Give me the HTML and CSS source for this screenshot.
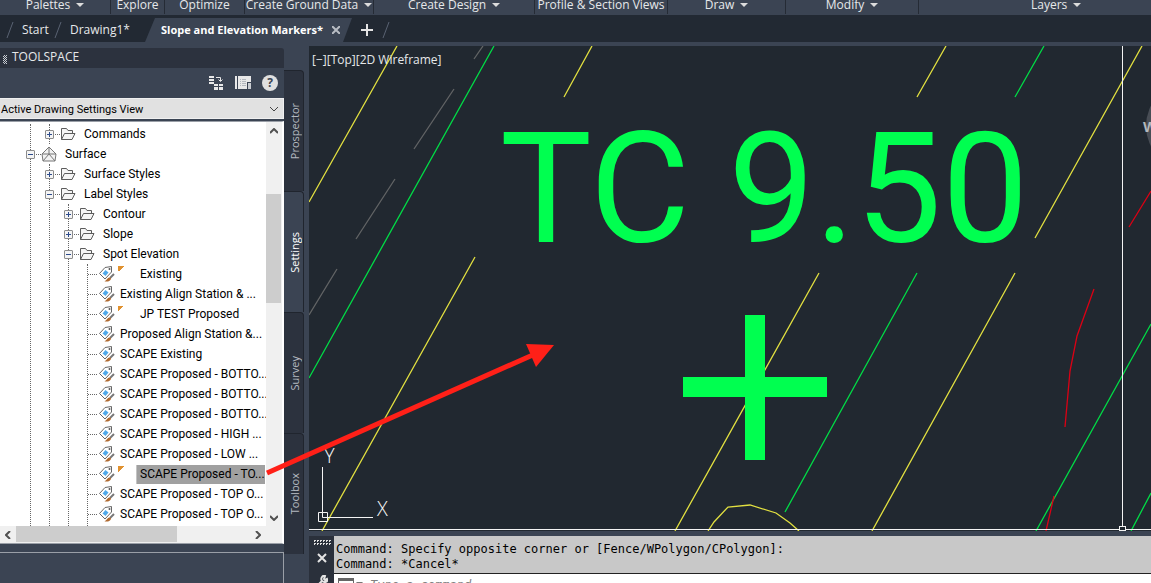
FILE: index.html
```html
<!DOCTYPE html>
<html lang="en">
<head>
  <meta charset="utf-8">
  <title>Slope and Elevation Markers</title>
  <link rel="stylesheet" href="styles.css">
</head>
<body>

  <!-- icons used in the tree -->
  <svg class="defs" width="0" height="0" aria-hidden="true">
    <symbol id="folder" viewBox="0 0 16 16">
      <path d="M1.500 13.500V2.500H6.500L8 4.500H12.500V7.500M1.500 13.500L4.500 7.500H15L12 13.500Z" fill="#f4f4f4" stroke="#5c5c5c"/>
    </symbol>
    <symbol id="surface" viewBox="0 0 16 16">
      <path d="M8 1L1 8L2 15H14L15 8ZM8 1V8M1 8H8L15 8M8 8L2 15M8 8L14 15" fill="#f2f2f2" stroke="#777"/>
    </symbol>
    <symbol id="tag" viewBox="0 0 16 16">
      <path d="M6 1.500L12.500 .500V6L6 13L.500 7.500Z" fill="#fff" stroke="#666"/>
      <circle cx="10.500" cy="3" r="1" fill="#555"/>
      <path d="M6.500 4L9.500 6.500L6.500 10L3.500 7.500Z" fill="#4fa9ea"/>
      <path d="M15 8L11 12" stroke="#777" stroke-width="2"/>
      <path d="M12 12L10 11.500C8 12 8 14 5.500 15.500C9 16 12 15 12 12Z" fill="#b06a30"/>
    </symbol>
  </svg>

  <nav class="ribbon">
    <button class="menu">Palettes</button>
    <button class="plain">Explore</button>
    <button class="plain">Optimize</button>
    <button class="menu">Create Ground Data</button>
    <button class="menu">Create Design</button>
    <button class="plain">Profile &amp; Section Views</button>
    <button class="menu">Draw</button>
    <button class="menu">Modify</button>
    <button class="menu layers">Layers</button>
  </nav>

  <nav class="files">
    <svg class="slash" width="8" height="16"><path d="M7 0L1 16"/></svg>
    <a href="#" class="file start">Start</a>
    <svg class="slash" width="8" height="16"><path d="M7 0L1 16"/></svg>
    <a href="#" class="file drawing">Drawing1*</a>
    <div class="file active">
      <a href="#">Slope and Elevation Markers*</a>
      <button class="close" aria-label="Close tab"><svg width="8" height="8"><path d="M0 0L8 8M8 0L0 8"/></svg></button>
    </div>
    <button class="add" aria-label="New tab"><svg width="12" height="12"><path d="M6 0V12M0 6H12"/></svg></button>
    <svg class="slash" width="8" height="16"><path d="M7 0L1 16"/></svg>
  </nav>

  <main>
    <section class="toolspace">
      <h1><span class="grip"></span>TOOLSPACE</h1>
      <div class="tools">
        <button aria-label="Item view"><svg width="16" height="16">
          <path d="M1 1H6V3H1ZM1 4H6V6H1ZM1 7H6V9H1ZM6 9H10V11H6ZM6 12H10V15H6ZM11 9H15V11H11ZM11 12H15V15H11Z" fill="#e8e8e8"/>
          <path d="M8 2.500H12.500V6M10.500 4.500L12.500 6.500L14.500 4.500" fill="none" stroke="#e8e8e8"/></svg></button>
        <button aria-label="Preview"><svg width="16" height="16">
          <path d="M0 1H2V14H0ZM3 1H16V7H12V14H3Z" fill="#e8e8e8"/>
          <path d="M5 4.500H11M5 6.500H11M5 8.500H11M5 10.500H11" stroke="#b4b8be" stroke-dasharray="1 1 4 1"/>
          <path d="M13 8H16V14H13Z" fill="#c9ccd1"/></svg></button>
        <button class="help" aria-label="Help">?</button>
      </div>
      <select class="view" aria-label="View">
        <option>Active Drawing Settings View</option>
      </select>

      <div class="tree-box">
        <div class="tree">
          <ul>
            <li>
              <ul>
                <li><div class="row"><button class="box plus" aria-label="Expand"></button><svg class="icon"><use href="#folder"/></svg>Commands</div></li>
              </ul>
            </li>
            <li><div class="row"><button class="box" aria-label="Collapse"></button><svg class="icon"><use href="#surface"/></svg>Surface</div>
              <ul>
                <li><div class="row"><button class="box plus" aria-label="Expand"></button><svg class="icon"><use href="#folder"/></svg>Surface Styles</div></li>
                <li><div class="row"><button class="box" aria-label="Collapse"></button><svg class="icon"><use href="#folder"/></svg>Label Styles</div>
                  <ul>
                    <li><div class="row"><button class="box plus" aria-label="Expand"></button><svg class="icon"><use href="#folder"/></svg>Contour</div></li>
                    <li><div class="row"><button class="box plus" aria-label="Expand"></button><svg class="icon"><use href="#folder"/></svg>Slope</div></li>
                    <li><div class="row"><button class="box" aria-label="Collapse"></button><svg class="icon"><use href="#folder"/></svg>Spot Elevation</div>
                      <ul>
                        <li class="row leaf used"><svg class="icon"><use href="#tag"/></svg><span>Existing</span></li>
                        <li class="row leaf"><svg class="icon"><use href="#tag"/></svg><span>Existing Align Station &amp; ...</span></li>
                        <li class="row leaf used"><svg class="icon"><use href="#tag"/></svg><span>JP TEST Proposed</span></li>
                        <li class="row leaf"><svg class="icon"><use href="#tag"/></svg><span>Proposed Align Station &amp;...</span></li>
                        <li class="row leaf"><svg class="icon"><use href="#tag"/></svg><span>SCAPE Existing</span></li>
                        <li class="row leaf"><svg class="icon"><use href="#tag"/></svg><span>SCAPE Proposed - BOTTO...</span></li>
                        <li class="row leaf"><svg class="icon"><use href="#tag"/></svg><span>SCAPE Proposed - BOTTO...</span></li>
                        <li class="row leaf"><svg class="icon"><use href="#tag"/></svg><span>SCAPE Proposed - BOTTO...</span></li>
                        <li class="row leaf"><svg class="icon"><use href="#tag"/></svg><span>SCAPE Proposed - HIGH ...</span></li>
                        <li class="row leaf"><svg class="icon"><use href="#tag"/></svg><span>SCAPE Proposed - LOW ...</span></li>
                        <li class="row leaf used selected"><svg class="icon"><use href="#tag"/></svg><span>SCAPE Proposed - TO...</span></li>
                        <li class="row leaf"><svg class="icon"><use href="#tag"/></svg><span>SCAPE Proposed - TOP O...</span></li>
                        <li class="row leaf"><svg class="icon"><use href="#tag"/></svg><span>SCAPE Proposed - TOP O...</span></li>
                        <li class="row leaf used"><svg class="icon"><use href="#tag"/></svg></li>
                      </ul>
                    </li>
                  </ul>
                </li>
              </ul>
            </li>
          </ul>
        </div>
        <div class="vbar">
          <button aria-label="Scroll up"><svg width="8" height="6"><path d="M0 5L4 1L8 5"/></svg></button>
          <div class="thumb"></div>
          <button aria-label="Scroll down"><svg width="8" height="6"><path d="M0 1L4 5L8 1"/></svg></button>
        </div>
        <div class="hbar">
          <button aria-label="Scroll left"><svg width="6" height="8"><path d="M5 0L1 4L5 8"/></svg></button>
          <div class="thumb"></div>
          <button aria-label="Scroll right"><svg width="6" height="8"><path d="M1 0L5 4L1 8"/></svg></button>
        </div>
      </div>
      <div class="details"></div>
    </section>

    <nav class="side">
      <button><span>Prospector</span></button>
      <button class="on"><span>Settings</span></button>
      <button><span>Survey</span></button>
      <button><span>Toolbox</span></button>
    </nav>

    <section class="work">
      <div class="canvas">
        <svg class="model" viewBox="309 46 842 485" preserveAspectRatio="xMinYMin slice">
          <g class="grey">
            <path d="M483 46L474 59M454 89L414 149M395 179L356 239M337 269L309 315"/>
          </g>
          <g class="yellow">
            <path d="M397 46L309 202M592 46L564 97M946 46L917 97M1142 46L1035 238M475 257L322 531M819 273L675 531M1015 273L872 531"/>
            <path d="M708 531L714 522L728 507L750 505L776 513L790 523L799 531"/>
          </g>
          <g class="green">
            <path d="M494 46L309 378M1044 46L1015 97M917 273L785 512M1151 324L1036 531M1151 493L1131 531"/>
          </g>
          <g class="red">
            <path d="M1151 191L1129 227M1094 289L1077 336L1070 371L1065 427M1054 496L1046 531"/>
          </g>
          <!-- spot elevation label -->
          <text class="spot" x="500" y="242">TC 9.50</text>
          <path class="marker" d="M745 315H765V377H827V397H765V460H745V397H683V377H745Z"/>
          <!-- view cube -->
          <circle cx="1190" cy="126" r="44" fill="#484d55"/>
          <text class="west" x="1143" y="132">W</text>
          <!-- crosshair and ucs -->
          <path class="white" d="M1122.500 46V526M309 529.500H1151"/>
          <rect class="white pick" x="1119.500" y="526.500" width="6" height="4"/>
          <path class="white" d="M322.500 467V517.500H373M318.500 512.500H327.500V521.500H318.500Z"/>
          <text class="axis" x="324" y="463">Y</text>
          <text class="axis" x="377" y="516">X</text>
        </svg>
        <div class="viewctl"><button>[−]</button><button>[Top]</button><button>[2D Wireframe]</button></div>
      </div>
      <div class="command">
        <div class="handle">
          <span class="dots"></span>
          <button aria-label="Close"><svg width="10" height="10"><path d="M1 1L9 9M9 1L1 9" stroke="#e4e4e4" stroke-width="2"/></svg></button>
          <button aria-label="Customize"><svg width="12" height="12"><path d="M1 11L6 6M6 6C4 3 7 0 9 1L8 4L9 5L11 4C12 7 9 8 6 6" fill="none" stroke="#e4e4e4" stroke-width="2"/></svg></button>
        </div>
        <div class="lines">
          <pre>Command: Specify opposite corner or [Fence/WPolygon/CPolygon]:
Command: *Cancel*</pre>
          <div class="prompt">
            <svg width="28" height="14"><path d="M.500 1.500H15.500V13.500H.500Z" fill="#fff" stroke="#666"/><path d="M0 1H16V4H0Z" fill="#666"/><path d="M18 5H25L21.500 9Z" fill="#777"/></svg>
            <input type="text" aria-label="Command" placeholder="Type a command">
          </div>
        </div>
      </div>
    </section>
  </main>

  <svg class="arrow" width="560" height="500" aria-hidden="true">
    <path d="M267 473L535 354" stroke="#ff2018" stroke-width="5"/>
    <path d="M554 345L526 344L536 367Z" fill="#ff2018"/>
  </svg>

</body>
</html>
```
FILE: styles.css
```css
* {
  box-sizing: border-box;
}

body {
  margin: 0;
  height: 100vh;
  display: flex;
  flex-direction: column;
  overflow: hidden;
  position: relative;
  background: #3b4453;
  color: #e6e8ea;
  font: 12px/16px "Open Sans", "Noto Sans", sans-serif;
}

button {
  padding: 0;
  border: 0;
  background: none;
  color: inherit;
  font: inherit;
  cursor: pointer;
}

a {
  color: inherit;
  text-decoration: none;
}

svg {
  display: block;
  flex: none;
}

.defs {
  position: absolute;
}

/* ribbon panel titles */
.ribbon {
  flex: none;
  display: grid;
  grid-template-columns: 111px 54px 80px 129px 161px 133px 118px 133px 1fr;
  height: 15px;
}

.ribbon button {
  display: flex;
  align-items: center;
  justify-content: center;
  gap: 6px;
  height: 14px;
  padding-bottom: 4px;
  line-height: 10px;
  border-right: 1px solid #252b35;
  white-space: nowrap;
}

.ribbon .menu::after {
  content: "";
  border: 4px solid transparent;
  border-top-color: #dcdcdc;
  border-bottom: 0;
}

.ribbon .layers {
  justify-content: flex-start;
  padding-left: 112px;
  border: 0;
}

/* file tabs */
.files {
  flex: none;
  display: flex;
  align-items: center;
  height: 27px;
  padding: 3px 0 0 6px;
  background: #222933;
}

.slash path {
  stroke: #5a6373;
}

.file {
  line-height: 24px;
  white-space: nowrap;
}

.start {
  width: 40px;
  padding-left: 8px;
}

.drawing {
  width: 83px;
  padding-left: 8px;
}

.active {
  display: flex;
  align-items: center;
  justify-content: space-between;
  width: 207px;
  padding: 0 12px 0 16px;
  background: #3b4453;
  color: #fff;
  font-size: 11px;
  font-weight: bold;
  clip-path: polygon(10px 0, 100% 0, calc(100% - 9px) 100%, 0 100%);
}

.close path {
  stroke: #b8bcc3;
  stroke-width: 2;
}

.add {
  width: 30px;
  padding-left: 9px;
}

.add path {
  stroke: #e4e4e4;
  stroke-width: 2;
}

main {
  flex: 1;
  display: flex;
  min-height: 0;
  padding-top: 4px;
}

/* toolspace palette */
.toolspace {
  flex: none;
  display: flex;
  flex-direction: column;
  width: 284px;
  padding-top: 2px;
}

.toolspace h1 {
  flex: none;
  display: flex;
  align-items: center;
  gap: 5px;
  margin: 0;
  height: 20px;
  padding: 0 0 2px 3px;
  background: #2c323e;
  border-radius: 0 3px 0 0;
  font-size: 12px;
  font-weight: normal;
}

.grip {
  width: 4px;
  height: 9px;
  margin-top: 4px;
  background: repeating-conic-gradient(#c8ccd2 0 25%, transparent 0 50%) 0 0 / 2px 2px;
}

.tools {
  flex: none;
  display: flex;
  align-items: center;
  justify-content: flex-end;
  gap: 11px;
  height: 30px;
  padding-right: 6px;
}

.help {
  width: 16px;
  height: 16px;
  border-radius: 50%;
  background: #e0e0e0;
  color: #3b4453;
  font-weight: bold;
  line-height: 16px;
}

.view {
  flex: none;
  appearance: none;
  height: 21px;
  margin: 0;
  padding: 1px 0 0 1px;
  border: 1px solid #f0f0f0;
  border-left: 0;
  border-radius: 0;
  background: #e1e1e1 url("data:image/svg+xml,%3Csvg xmlns='http://www.w3.org/2000/svg' width='10' height='6'%3E%3Cpath d='M1 1L5 5L9 1' fill='none' stroke='%23444'/%3E%3C/svg%3E") no-repeat right 4px center;
  color: #000;
  font: 11px Roboto, "Noto Sans", sans-serif;
}

.tree-box {
  flex: 1;
  display: grid;
  grid-template-columns: 1fr 16px;
  grid-template-rows: minmax(0, 1fr) 17px;
  min-height: 0;
  margin-top: 2px;
  border: 1px solid #9a9fa7;
  border-width: 1px 0;
  border-right: 2px solid #fff;
  background: #f0f0f0;
}

.tree {
  overflow: hidden;
  padding: 2px 0 0 12px;
  background: #fff;
  color: #000;
  font-family: Roboto, "Noto Sans", sans-serif;
}

.tree ul {
  list-style: none;
  margin: 0 0 0 18px;
  padding: 0;
  border-left: 1px dotted #666;
}

.row {
  display: flex;
  align-items: center;
  height: 20px;
  white-space: nowrap;
}

/* the bars are gradients, the dotted stub to the icon is drawn by the row */
.box {
  flex: none;
  width: 9px;
  height: 9px;
  margin-left: -5px;
  border: 1px solid #8c8c8c;
  border-radius: 1px;
  background: linear-gradient(#2c4b8c, #2c4b8c) center / 5px 1px no-repeat #f4f4f4;
}

.plus {
  background: linear-gradient(#2c4b8c, #2c4b8c) center / 5px 1px no-repeat, linear-gradient(#2c4b8c, #2c4b8c) center / 1px 5px no-repeat #f4f4f4;
}

div.row {
  background: repeating-linear-gradient(90deg, #666 0 1px, transparent 1px 2px) 5px 10px / 5px 1px no-repeat;
}

.icon {
  width: 16px;
  height: 16px;
  margin-right: 8px;
}

.box + .icon {
  margin-left: 6px;
}

.leaf::before {
  content: "";
  flex: none;
  width: 9px;
  margin-right: 2px;
  border-top: 1px dotted #666;
}

.leaf .icon {
  margin-right: 5px;
}

/* orange corner on styles that are in use */
.used {
  background: linear-gradient(135deg, #e0912f 50%, transparent 50%) 30px 2px / 6px 6px no-repeat;
}

.used span {
  margin-left: 16px;
  padding-left: 4px;
}

.selected span {
  flex: 1;
  height: 19px;
  margin-right: 1px;
  padding-left: 3px;
  line-height: 19px;
  background: #a0a0a0;
  border-left: 1px solid #c4c4c4;
}

.vbar {
  display: grid;
  grid-template-rows: 17px 55fr 109fr 206fr 17px;
}

.hbar {
  display: grid;
  grid-template-columns: 16px 160fr 73fr 16px;
}

.vbar button,
.hbar button {
  display: grid;
  place-items: center;
}

.vbar path,
.hbar path {
  fill: none;
  stroke: #505050;
  stroke-width: 2;
}

.thumb {
  background: #cdcdcd;
}

.vbar .thumb {
  grid-row: 3;
  margin-right: 1px;
}

.vbar button:last-child {
  grid-row: 5;
}

.hbar .thumb {
  margin-bottom: 1px;
}

.hbar button:last-child {
  grid-column: 4;
}

.details {
  flex: none;
  height: 31px;
  margin-top: 8px;
  border: 1px solid #9a9fa7;
  border-width: 1px 1px 0 0;
}

/* palette side tabs */
.side {
  flex: none;
  width: 20px;
  margin-right: 5px;
  padding-top: 24px;
}

.side button {
  display: grid;
  place-items: center;
  width: 20px;
  height: 121px;
  padding-left: 2px;
  background: #2c323e;
  border: 1px solid #20252e;
  border-width: 1px 1px 0 0;
  border-radius: 0 4px 0 0;
  color: #b4b9c0;
  font-size: 11px;
}

.side .on {
  background: #3b4453;
  color: #fff;
}

.side span {
  writing-mode: vertical-rl;
  transform: rotate(180deg);
}

/* drawing area */
.work {
  flex: 1;
  display: flex;
  flex-direction: column;
  min-width: 0;
}

.canvas {
  flex: 1;
  position: relative;
  min-height: 0;
  background: #212830;
}

.model {
  position: absolute;
  inset: 0;
  width: 100%;
  height: 100%;
}

.model path {
  fill: none;
}

.model g {
  stroke-width: 1.3;
}

.grey {
  stroke: #626465;
}

.yellow {
  stroke: #e2e040;
}

.green {
  stroke: #00dc46;
}

.red {
  stroke: #dc0014;
}

.white {
  fill: none;
  stroke: #f4f4f4;
}

.white.pick {
  fill: #212830;
}

.spot {
  fill: #00ff50;
  font: 154px Roboto, "Liberation Sans", sans-serif;
}

.model .marker {
  fill: #00ff50;
}

.west {
  fill: #b4b8bc;
  font: bold 15px "Liberation Sans", sans-serif;
}

.axis {
  fill: #f4f4f4;
  font: 300 20px "Open Sans", sans-serif;
}

.viewctl {
  position: relative;
  display: flex;
  padding: 6px 3px;
}

/* command line */
.command {
  flex: none;
  display: flex;
  height: 47px;
  margin-top: 5px;
  overflow: hidden;
}

.handle {
  display: flex;
  flex-direction: column;
  align-items: center;
  gap: 12px;
  width: 25px;
  padding-top: 4px;
  background: #2a303b;
}

.dots {
  flex: none;
  width: 18px;
  height: 6px;
  margin-bottom: -5px;
  background: conic-gradient(#e0e0e0 25%, transparent 0) 0 0 / 3px 3px;
}

.lines {
  flex: 1;
  display: flex;
  flex-direction: column;
  min-width: 0;
}

pre {
  flex: none;
  margin: 0;
  padding: 6px 2px 1px;
  background: #c8c8c8;
  border-bottom: 1px solid #222;
  color: #000;
  font: 12px/15px "DejaVu Sans Mono", "Liberation Mono", monospace;
}

.prompt {
  flex: none;
  display: flex;
  padding: 3px 4px;
  gap: 4px;
  background: #fff;
}

.prompt input {
  flex: 1;
  min-width: 0;
  height: 16px;
  padding: 0;
  border: 0;
  outline: 0;
  font: italic 12px "DejaVu Sans Mono", "Liberation Mono", monospace;
}

.prompt input::placeholder {
  color: #808080;
}

/* callout drawn across the palette and the drawing */
.arrow {
  position: absolute;
  top: 0;
  left: 0;
  pointer-events: none;
}
```
